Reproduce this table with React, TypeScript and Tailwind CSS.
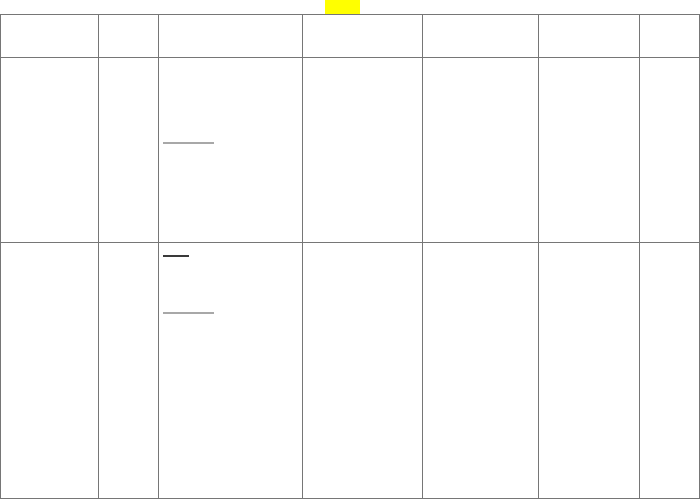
import React from "react";

const widths = ["w-[98px]", "w-[60px]", "w-[144px]", "w-[120px]", "w-[116px]", "w-[101px]", "w-[60px]"];

function Row({ h, third }: { h: string; third?: React.ReactNode }) {
  return (
    <div className={`flex ${h}`}>
      {widths.map((w, i) => (
        <div key={i} className={`${w} shrink-0 border-r border-b border-[#767676] box-border`}>
          {i === 2 ? third : null}
        </div>
      ))}
    </div>
  );
}

export default function App() {
  return (
    <div className="w-[700px] h-[499px] bg-white overflow-hidden" style={{ fontFamily: '"Liberation Sans", Arial, sans-serif' }}>
      <div className="ml-[325px] w-[35px] h-[14px] bg-[#ffff00]" />
      <div className="w-[700px] border-l border-t border-[#767676] box-border">
        <Row h="h-[43px]" />
        <Row
          h="h-[185px]"
          third={
            <div className="pl-[4px] pt-[84px]">
              <div className="w-[51px] h-[2px] bg-[#a8a8a8]" />
            </div>
          }
        />
        <Row
          h="h-[256px]"
          third={
            <div className="pl-[4px] pt-[12px]">
              <div className="w-[26px] h-[2px] bg-[#3a3a3a]" />
              <div className="mt-[55px] w-[51px] h-[2px] bg-[#a8a8a8]" />
            </div>
          }
        />
      </div>
    </div>
  );
}
